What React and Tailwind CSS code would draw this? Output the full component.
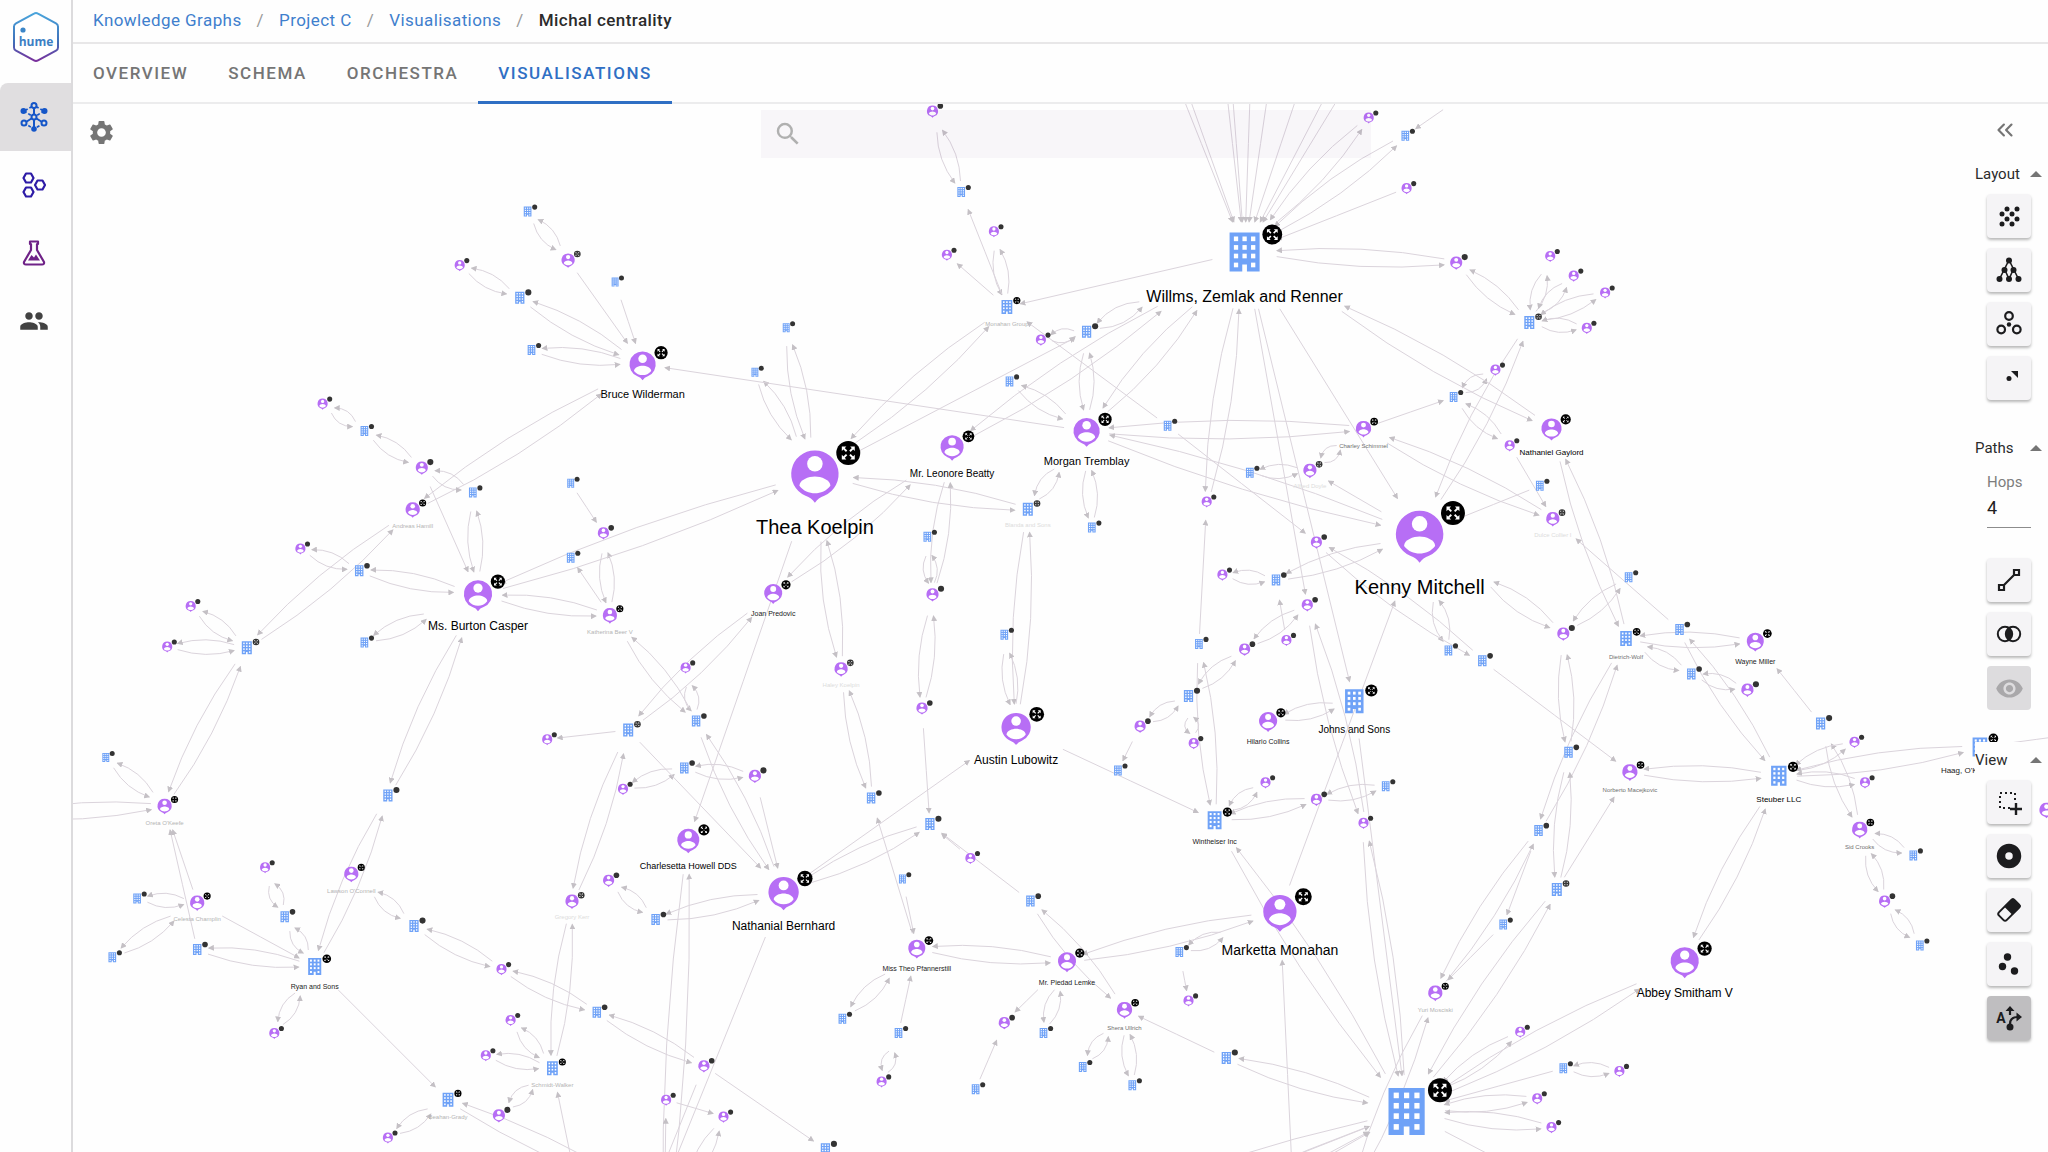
// VisualisationPage.jsx
import React, { useState } from 'react';
import { MdSettings, MdSearch, MdGroup, MdVisibility } from 'react-icons/md';
import { ChevronsLeft } from 'lucide-react';

const ZOOM = 1.306;
const PAN = { x: -73, y: -104 };

// id: [type, x, y, size, label]  (P = person, B = building, X = outside of the viewport)
const NODES = {
  b1: ['B', 404, 162, 10], p1: ['P', 435, 199, 13], p2: ['P', 352, 203, 10], b2: ['B', 398, 228, 12],
  b3: ['B', 471, 216, 9], b4: ['B', 407, 268, 10], bruce: ['P', 492, 279, 26, 'Bruce Wilderman'],
  b5: ['B', 602, 251, 9], b6: ['B', 578, 285, 9], andreas: ['P', 316, 390, 14, 'Andreas Hamill'],
  p3: ['P', 247, 309, 10], b7: ['B', 279, 330, 10], p4: ['P', 323, 358, 12], b8: ['B', 362, 377, 10],
  p5: ['P', 230, 420, 10], b9: ['B', 275, 437, 11], casper: ['P', 366, 455, 28, 'Ms. Burton Casper'],
  b10: ['B', 279, 492, 10], p6: ['P', 146, 464, 10], p7: ['P', 128, 495, 10], b11: ['B', 189, 496, 13],
  b12: ['B', 437, 370, 9], p8: ['P', 462, 408, 11], b13: ['B', 437, 427, 10], kath: ['P', 467, 471, 14, 'Katherina Beer V'],
  p9: ['P', 525, 511, 10], b14: ['B', 481, 559, 13], b15: ['B', 533, 552, 11], p10: ['P', 419, 566, 10],
  thea: ['P', 624, 363, 47, 'Thea Koelpin'], joan: ['P', 592, 454, 18, 'Joan Predovic'],
  p12: ['P', 644, 512, 13, 'Haley Koelpin'], b16: ['B', 667, 611, 11], b17: ['B', 787, 390, 13, 'Blanda and Sons'],
  monahan: ['B', 771, 235, 14, 'Monahan Group'], b18: ['B', 832, 254, 12], leonore: ['P', 729, 342, 23, 'Mr. Leonore Beatty'],
  p13: ['P', 714, 455, 12], b19: ['B', 710, 411, 10], p14: ['P', 706, 542, 11], b20: ['B', 712, 631, 12],
  morgan: ['P', 832, 330, 26, 'Morgan Tremblay'], b21: ['B', 773, 292, 10], b22: ['B', 836, 404, 10],
  b23: ['B', 894, 326, 10], p15: ['P', 1008, 415, 11], p16: ['P', 797, 260, 10], p17: ['P', 761, 177, 10],
  p18: ['P', 725, 195, 10], b24: ['B', 736, 147, 10], p19: ['P', 714, 85, 11],
  willms: ['B', 953, 193, 39, 'Willms, Zemlak and Renner'], p20: ['P', 1048, 90, 10], b25: ['B', 1076, 104, 10],
  p21: ['P', 1077, 144, 10], p22: ['P', 1115, 201, 12], b26: ['B', 1171, 247, 13], p23: ['P', 1187, 196, 10],
  p24: ['P', 1205, 211, 10], p25: ['P', 1229, 224, 10], p26: ['P', 1215, 251, 10], p27: ['P', 1145, 283, 10],
  b27: ['B', 1113, 304, 10], charley: ['P', 1044, 328, 15, 'Charley Schimmel'], p28: ['P', 1156, 341, 10],
  dulce: ['P', 1189, 397, 13, 'Dulce Collier I'], b28: ['B', 1179, 372, 10], gaylord: ['P', 1188, 328, 20, 'Nathaniel Gaylord'],
  doyle: ['P', 1003, 360, 13, 'Alfred Doyle'], b29: ['B', 957, 362, 10], p30: ['P', 924, 384, 10], b30: ['B', 918, 493, 10],
  p31: ['P', 1001, 463, 11], johns: ['B', 1037, 537, 24, 'Johns and Sons'], p46: ['P', 1044, 630, 10],
  p32: ['P', 936, 440, 10], b31: ['B', 977, 444, 11], p33: ['P', 985, 490, 10], p34: ['P', 953, 497, 11],
  b32: ['B', 910, 533, 12], p35: ['P', 873, 556, 11], p36: ['P', 914, 569, 10], b33: ['B', 856, 590, 10],
  kenny: ['P', 1087, 409, 47, 'Kenny Mitchell'], p40: ['P', 1197, 485, 12], b34: ['B', 1247, 442, 10],
  b35: ['B', 1109, 498, 10], b36: ['B', 1135, 506, 11], norberto: ['P', 1248, 591, 15, 'Norberto Macejkovic'],
  b37: ['B', 1286, 482, 11], steuber: ['B', 1362, 594, 20, 'Steuber LLC'], dietrich: ['B', 1245, 489, 15, 'Dietrich-Wolf'],
  wayne: ['P', 1344, 491, 17, 'Wayne Miller'], b38: ['B', 1295, 516, 11], p41: ['P', 1338, 528, 12], b39: ['B', 1394, 554, 12],
  sid: ['P', 1424, 635, 15, 'Sid Crooks'], p42: ['P', 1420, 568, 10], p43: ['P', 1428, 599, 10],
  haag: ['B', 1516, 572, 19, "Haag, O'Kon and Roe"], p50: ['P', 1567, 620, 14], b40: ['B', 1465, 655, 10], p45: ['P', 1443, 690, 11],
  b41: ['B', 1470, 724, 10], abbey: ['P', 1290, 736, 28, 'Abbey Smitham V'], big: ['B', 1077, 851, 47],
  b42: ['B', 1201, 576, 11], b43: ['B', 1178, 636, 11], b44: ['B', 1192, 681, 13], yuri: ['P', 1099, 760, 14, 'Yuri Mosciski'],
  b45: ['B', 1151, 708, 10], hilario: ['P', 971, 552, 18, 'Hilario Collins'], p47: ['P', 969, 599, 10],
  wint: ['B', 930, 628, 18, 'Wintheiser Inc'], p48: ['P', 1008, 612, 11], b46: ['B', 1061, 602, 10],
  austin: ['P', 778, 557, 29, 'Austin Lubowitz'], b47: ['B', 769, 486, 10], p49: ['P', 743, 657, 10], b48: ['B', 789, 690, 11],
  shera: ['P', 861, 773, 15, 'Shera Ullrich'], marketta: ['P', 980, 698, 33, 'Marketta Monahan'],
  piedad: ['P', 817, 736, 18, 'Mr. Piedad Lemke'], b49: ['B', 903, 729, 10], p51: ['P', 910, 766, 10],
  theo: ['P', 702, 726, 17, 'Miss Theo Pfannerstill'], p52: ['P', 769, 783, 11], b50: ['B', 799, 791, 10],
  b51: ['B', 747, 834, 10], b52: ['B', 829, 817, 10], b53: ['B', 867, 831, 10], b54: ['B', 939, 810, 12],
  b55: ['B', 645, 780, 10], b56: ['B', 688, 791, 10], p53: ['P', 675, 828, 10], b57: ['B', 691, 673, 9],
  charlesetta: ['P', 527, 643, 22, 'Charlesetta Howell DDS'], nathanial: ['P', 600, 683, 30, 'Nathanial Bernhard'],
  p54: ['P', 578, 594, 12], b58: ['B', 524, 588, 11], p55: ['P', 477, 604, 10], p56: ['P', 466, 674, 11], b59: ['B', 502, 704, 11],
  p11: ['P', 438, 690, 13, 'Gregory Kerr'], b60: ['B', 423, 818, 14, 'Schmidt-Walker'], p57: ['P', 391, 781, 10],
  p58: ['P', 372, 808, 10], p59: ['P', 382, 854, 12], b61: ['B', 343, 842, 14, 'Beahan-Grady'], p60: ['P', 297, 871, 10],
  oreta: ['P', 126, 617, 14, "Oreta O'Keefe"], b62: ['B', 81, 580, 9], b63: ['B', 151, 727, 11],
  celesta: ['P', 151, 691, 14, 'Celesta Champlin'], b64: ['B', 105, 688, 10], b65: ['B', 86, 733, 10],
  ryan: ['B', 241, 740, 17, 'Ryan and Sons'], p61: ['P', 210, 791, 10], p62: ['P', 203, 664, 10], b66: ['B', 218, 702, 11],
  b67: ['B', 297, 609, 12], lawson: ['P', 269, 669, 14, "Lawson O'Connell"], b68: ['B', 317, 709, 12], p63: ['P', 384, 742, 10],
  b69: ['B', 457, 775, 11], p64: ['P', 539, 816, 11], b70: ['B', 632, 880, 12], p65: ['P', 510, 842, 10], p66: ['P', 554, 855, 10],
  p67: ['P', 1164, 790, 10], b71: ['B', 1197, 818, 10], p68: ['P', 1240, 820, 10], p69: ['P', 1177, 841, 10], p70: ['P', 1188, 863, 10],
  t1: ['X', 896, 50], t2: ['X', 902, 50], t3: ['X', 937, 50], t4: ['X', 942, 50], t5: ['X', 958, 50], t6: ['X', 974, 50],
  t7: ['X', 1001, 50], t8: ['X', 1022, 60], t9: ['X', 1034, 60], t10: ['X', 1105, 84], t11: ['X', 700, 66],
  r1: ['X', 1590, 562], l1: ['X', 10, 624], d1: ['X', 510, 930], d2: ['X', 500, 930], d3: ['X', 440, 900], d4: ['X', 480, 907],
  d5: ['X', 530, 900], d6: ['X', 509, 910], d7: ['X', 505, 900], d8: ['X', 990, 910], d9: ['X', 1040, 900],
  d10: ['X', 830, 930], d11: ['X', 870, 950], d12: ['X', 1190, 910], d13: ['X', 930, 930],
};

const TWO_WAY = `b1-p1 p2-b2 b2-bruce b4-bruce bruce-andreas b5-thea b6-thea p3-b7 b7-p4 p4-b8 b8-casper p5-b9
  b9-casper b10-casper p6-b11 p7-b11 b11-andreas b11-oreta p8-kath kath-casper thea-casper p9-b15 b15-kath
  b14-joan b14-p11 joan-leonore thea-p12 p12-b16 thea-b17 thea-monahan willms-b18 willms-leonore willms-morgan
  leonore-p13 b19-p13 p13-p14 b21-morgan b18-morgan morgan-b17 morgan-b22 morgan-charley morgan-kenny p16-b18
  p17-monahan p19-b24 p20-willms b25-willms p22-willms p22-b26 p23-b26 p24-b26 p25-b26 p26-b26 b26-kenny
  p27-b27 b27-p28 gaylord-willms gaylord-dietrich charley-dulce b29-doyle doyle-charley p30-willms b30-wint
  p31-p46 p32-b31 b31-kenny p31-p34 p34-b32 b32-p35 b32-p36 kenny-p40 p40-b34 kenny-b35 b36-p15 b37-steuber
  dietrich-wayne dietrich-b38 b38-p41 b39-sid p42-steuber p43-steuber steuber-haag b40-sid p45-sid p45-b41
  steuber-abbey abbey-big norberto-steuber p40-b42 dietrich-b43 b42-b44 b43-yuri big-b44 johns-hilario
  p46-big p47-wint p48-wint b46-p48 austin-b17 b47-austin nathanial-b20 wint-big b48-shera marketta-piedad
  marketta-b49 piedad-theo piedad-b50 shera-b52 shera-b53 b54-big theo-b55 b56-p53 d1-charlesetta b15-nathanial
  b58-p54 b58-p55 p56-b59 b59-nathanial p11-b60 p57-b60 p58-b60 p59-b60 b61-p60 b61-d4 b62-oreta oreta-l1
  b64-celesta b65-celesta b63-ryan ryan-p61 p62-b66 b66-ryan ryan-b67 b67-casper lawson-b68 b68-p63 p63-b69
  b69-p64 d5-p66 p67-big b71-p68 p69-big p70-big yuri-d9 d10-big d11-big`.trim().split(/\s+/);

const ONE_WAY = `p1-bruce b3-bruce morgan-bruce p4-casper b12-p8 kath-b13 b14-p10 thea-b18 thea-charlesetta
  monahan-p18 monahan-b24 willms-monahan p14-b20 b23-monahan b23-p15 t1-willms t2-willms t3-willms t4-willms
  t5-willms t6-willms t7-willms t8-willms t9-willms t10-b25 t11-p19 p21-willms charley-b27 p28-dulce b28-kenny
  kenny-doyle willms-kenny b30-p30 willms-p31 willms-johns p33-b31 p35-b33 marketta-kenny b36-norberto
  b37-dulce b39-wayne haag-r1 b44-norberto b43-b45 b45-yuri johns-big austin-wint nathanial-austin p49-b20
  b48-b20 b49-p51 d8-marketta piedad-p52 b51-p52 b54-shera b56-theo theo-b16 b57-theo p54-nathanial
  b14-nathanial nathanial-d2 d3-b60 b63-oreta celesta-oreta celesta-ryan ryan-b61 p64-b70 p65-p66 d6-p65
  p64-d7 b71-big big-d12 d13-big`.trim().split(/\s+/);

const toScreen = ([, x, y]) => ({ x: x * ZOOM + PAN.x, y: y * ZOOM + PAN.y });

const fontSizeOf = (size) => Math.max(6, Math.round(size * 0.416));

// distance at which a ray (dx, dy) from the origin leaves the box
const exitBox = (dx, dy, x0, x1, y0, y1) => {
  let tMin = 0;
  let tMax = Infinity;
  for (const [d, lo, hi] of [[dx, x0, x1], [dy, y0, y1]]) {
    if (Math.abs(d) < 1e-6) {
      if (lo > 0 || hi < 0) return 0;
      continue;
    }
    const a = lo / d;
    const b = hi / d;
    tMin = Math.max(tMin, Math.min(a, b));
    tMax = Math.min(tMax, Math.max(a, b));
  }
  return tMax > tMin ? tMax : 0;
};

const clearance = ([type, , , size, label], dx, dy) => {
  if (type === 'X') return 0;
  const icon = exitBox(dx, dy, -size * 0.75 - 3, size * 0.75 + 3, -size * 0.7 - 3, size * 0.7 + 3);
  const half = label ? label.length * fontSizeOf(size) * 0.26 : size * 0.7;
  const text = exitBox(dx, dy, -half, half, size * 0.7, size * 1.3 + 6);
  return Math.max(icon, text);
};

const Edge = ({ from, to, curved }) => {
  const a = toScreen(NODES[from]);
  const b = toScreen(NODES[to]);
  const len = Math.hypot(b.x - a.x, b.y - a.y);
  const ux = (b.x - a.x) / len;
  const uy = (b.y - a.y) / len;
  const side = curved ? 3 : 0;
  const bow = curved ? 7 + Math.min(6, len * 0.02) : 0;
  const start = clearance(NODES[from], ux, uy);
  const end = clearance(NODES[to], -ux, -uy);
  const x1 = a.x + ux * start - uy * side;
  const y1 = a.y + uy * start + ux * side;
  const x2 = b.x - ux * end - uy * side;
  const y2 = b.y - uy * end + ux * side;
  const cx = (x1 + x2) / 2 - uy * bow;
  const cy = (y1 + y2) / 2 + ux * bow;
  return (
    <path
      d={`M${x1.toFixed(1)} ${y1.toFixed(1)}Q${cx.toFixed(1)} ${cy.toFixed(1)} ${x2.toFixed(1)} ${y2.toFixed(1)}`}
      className="fill-none stroke-[#dbd4dc]"
      markerEnd="url(#arrow)"
    />
  );
};

const PersonShape = () => (
  <>
    <path d="M0-.5A.5.5 0 0 1 .2.46Q.07.5 0 .61Q-.07.5-.2.46A.5.5 0 0 1 0-.5Z" fill="#b76ef5" />
    <circle cy="-.22" r=".165" fill="#fff" />
    <path d="M-.33.25C-.33.12-.13.05 0 .05S.33.12.33.25C.25.36.12.41 0 .41S-.25.36-.33.25Z" fill="#fff" />
  </>
);

const BuildingShape = () => (
  <>
    <path d="M-.385-.5H.385V.5H.06V.32H-.06V.5H-.385Z" fill="#6fa2f7" />
    {[-0.34, -0.12, 0.1, 0.33].map((y) =>
      [-0.22, 0, 0.22].map((x) =>
        x === 0 && y === 0.33 ? null : (
          <rect key={`${x}${y}`} x={x - 0.055} y={y - 0.06} width=".11" height=".12" fill="#fff" />
        )
      )
    )}
  </>
);

const ExpandBadge = ({ size }) => (
  <>
    <circle r=".5" fill={size < 14 ? '#333' : '#000'} />
    {size >= 13 && (
      <g stroke="#fff" strokeWidth=".08" fill="#fff">
        {[0, 90, 180, 270].map((r) => (
          <g key={r} transform={`rotate(${r})`}>
            <path d="M.07-.07L.19-.19" />
            <path d="M.08-.27H.27V-.08Z" stroke="none" />
          </g>
        ))}
      </g>
    )}
  </>
);

const labelColor = (size) => {
  if (size >= 20) return '#000';
  if (size >= 17) return '#222';
  if (size >= 15) return '#707070';
  if (size >= 14) return '#b4b4b4';
  return '#dcdcdc';
};

const Node = ({ node }) => {
  const [type, , , size, label] = node;
  const { x, y } = toScreen(node);
  if (type === 'X') return null;
  return (
    <g transform={`translate(${x.toFixed(1)} ${y.toFixed(1)})`}>
      <g transform={`scale(${size})`}>{type === 'P' ? <PersonShape /> : <BuildingShape />}</g>
      <g transform={`translate(${size * 0.71} ${size * -0.45}) scale(${Math.max(5, size * 0.51)})`}>
        <ExpandBadge size={size} />
      </g>
      {label && (
        <text
          y={Math.round(size * 1.08 + 2)}
          textAnchor="middle"
          dominantBaseline="central"
          fontSize={fontSizeOf(size)}
          fill={labelColor(size)}
        >
          {label}
        </text>
      )}
    </g>
  );
};

const Graph = () => (
  <svg className="absolute inset-0 h-full w-full font-['Liberation_Sans',Arial,sans-serif]">
    <defs>
      <marker id="arrow" viewBox="0 0 6 6" refX="5" refY="3" markerWidth="6" markerHeight="6" markerUnits="userSpaceOnUse" orient="auto">
        <path d="M0 0L6 3L0 6Z" fill="#c4c0c5" />
      </marker>
    </defs>
    {TWO_WAY.map((pair) => {
      const [a, b] = pair.split('-');
      return (
        <g key={pair}>
          <Edge from={a} to={b} curved />
          <Edge from={b} to={a} curved />
        </g>
      );
    })}
    {ONE_WAY.map((pair) => {
      const [a, b] = pair.split('-');
      return <Edge key={pair} from={a} to={b} />;
    })}
    {Object.entries(NODES).map(([id, node]) => (
      <Node key={id} node={node} />
    ))}
  </svg>
);

const HumeLogo = () => (
  <svg viewBox="0 0 48 52" className="h-[52px] w-12">
    <defs>
      <linearGradient id="hume" x1="0" y1="0" x2="0" y2="1">
        <stop offset="0" stopColor="#4aa5dc" />
        <stop offset=".6" stopColor="#3f6fb8" />
        <stop offset="1" stopColor="#7a2f9c" />
      </linearGradient>
    </defs>
    <path
      d="M22 2.6Q24 1.4 26 2.6L44 12.3Q46 13.4 46 15.6V36.4Q46 38.6 44 39.7L26 49.4Q24 50.6 22 49.4L4 39.7Q2 38.6 2 36.4V15.6Q2 13.4 4 12.3Z"
      fill="#fff" stroke="url(#hume)" strokeWidth="2"
    />
    <circle cx="11" cy="19" r="2.6" fill="#3b86c8" />
    <text x="24" y="35" textAnchor="middle" fontSize="12" fontWeight="700" fill="#3d7fc4" fontFamily="'Open Sans', sans-serif">hume</text>
  </svg>
);

const KnowledgeIcon = () => (
  <svg viewBox="0 0 28 30" className="h-[30px] w-7" fill="none" stroke="#1556c8" strokeWidth="2">
    <path d="M14 6V12M14 18V26M11.5 16.5L6 20M16.5 16.5L22 20" />
    <path d="M12 4.5L4 9M16 4.5L24 9M4 9L12 14M24 9L16 14M4 21L14 27L24 21" strokeDasharray="3 2" strokeWidth="1.7" />
    <g fill="#e0dee0">
      <circle cx="14" cy="3.5" r="2.5" />
      <circle cx="14" cy="15" r="2.5" />
      <circle cx="4" cy="21" r="2.5" />
      <circle cx="24" cy="21" r="2.5" />
    </g>
    <g fill="#1556c8" stroke="none">
      <circle cx="3.5" cy="9" r="3" />
      <circle cx="24.5" cy="9" r="3" />
      <circle cx="14" cy="27" r="2.8" />
    </g>
  </svg>
);

const HexagonsIcon = () => (
  <svg viewBox="0 0 24 26" className="h-[26px] w-6" fill="none" stroke="#2d1ba6" strokeWidth="2.2" strokeLinejoin="round">
    <path d="M4 1.5H9L11.5 6L9 10.5H4L1.5 6ZM4 15.5H9L11.5 20L9 24.5H4L1.5 20ZM15.5 8.5H20.5L23 13L20.5 17.5H15.5L13 13Z" />
  </svg>
);

const FlaskIcon = () => (
  <svg viewBox="0 0 24 26" className="h-[26px] w-6" fill="none" stroke="#6f2287" strokeWidth="2.2" strokeLinejoin="round">
    <path d="M8 1.5H16V4H15V10L22 22Q22.5 24.5 20 24.5H4Q1.5 24.5 2 22L9 10V4H8Z" />
    <path d="M6 20.5L9.5 15L12 17.5L14 14.5L18 20.5Z" fill="#6f2287" stroke="none" />
  </svg>
);

const SIDEBAR = [
  { name: 'Knowledge Graphs', icon: <KnowledgeIcon /> },
  { name: 'Ontologies', icon: <HexagonsIcon /> },
  { name: 'Skills', icon: <FlaskIcon /> },
  { name: 'Users', icon: <MdGroup size={30} className="text-[#424242]" /> },
];

const TABS = ['Overview', 'Schema', 'Orchestra', 'Visualisations'];

const Dots = ({ points, r = 2.2 }) => points.map(([x, y]) => <circle key={`${x}-${y}`} cx={x} cy={y} r={r} />);

const ToolIcon = ({ children }) => (
  <svg viewBox="0 0 26 26" className="h-[26px] w-[26px] fill-current">{children}</svg>
);

const LAYOUT_TOOLS = [
  {
    name: 'Force layout',
    icon: <Dots points={[[11, 6], [21, 6], [6, 11], [16, 11], [11, 16], [21, 16], [6, 21], [16, 21]]} r={2.5} />,
  },
  {
    name: 'Hierarchical layout',
    icon: (
      <>
        <path d="M13 3L3.5 22M13 3L22.5 22M17.5 12L13 22M8.5 12L13 22" fill="none" stroke="currentColor" strokeWidth="1.6" />
        <Dots points={[[13, 3.5], [8.5, 13], [17.5, 13], [3.5, 22], [13, 22], [22.5, 22]]} r={3} />
      </>
    ),
  },
  {
    name: 'Radial layout',
    icon: (
      <>
        <Dots points={[[13, 13.5]]} r={2.2} />
        <g fill="none" stroke="currentColor" strokeWidth="2.2">
          <circle cx="13" cy="5" r="3.8" />
          <circle cx="5.2" cy="18.5" r="3.8" />
          <circle cx="20.8" cy="18.5" r="3.8" />
        </g>
      </>
    ),
  },
  {
    name: 'Directional layout',
    icon: (
      <>
        <circle cx="13" cy="13.5" r="2.5" />
        <path d="M15 6H22V13Z" />
      </>
    ),
  },
];

const PATH_TOOLS = [
  {
    name: 'Shortest path',
    icon: (
      <g fill="none" stroke="currentColor" strokeWidth="2.2">
        <path d="M3 18H8V23H3ZM18 3H23V8H18ZM8 18L18 8" />
      </g>
    ),
  },
  {
    name: 'Common neighbours',
    icon: (
      <>
        <g fill="none" stroke="currentColor" strokeWidth="2">
          <circle cx="9" cy="13" r="7.2" />
          <circle cx="17" cy="13" r="7.2" />
        </g>
        <path d="M13 6.5A8 8 0 0 1 13 19.5A8 8 0 0 1 13 6.5Z" />
      </>
    ),
  },
  { name: 'Show path', disabled: true, icon: <MdVisibility size={29} /> },
];

const VIEW_TOOLS = [
  {
    name: 'Select area',
    icon: (
      <>
        <path d="M4 4H19V19H4Z" fill="none" stroke="currentColor" strokeWidth="2" strokeDasharray="2 3" />
        <path d="M14 14H26V26H14Z" className="fill-[#f5f4f6]" />
        <path d="M20 14V26M14 20H26" stroke="currentColor" strokeWidth="2.4" />
      </>
    ),
  },
  { name: 'Centre', icon: <circle cx="13" cy="13" r="8" fill="none" stroke="currentColor" strokeWidth="8.5" /> },
  {
    name: 'Erase',
    icon: (
      <g transform="rotate(-45 13 13)">
        <rect x="2" y="7.5" width="22" height="11" rx="2.5" fill="none" stroke="currentColor" strokeWidth="2" />
        <path d="M12 7H23Q24.5 7 24.5 8.5V17.5Q24.5 19 23 19H12Z" />
      </g>
    ),
  },
  { name: 'Scatter', icon: <Dots points={[[11.5, 6], [6.5, 15.5], [18.5, 20]]} r={3.7} /> },
  {
    name: 'Toggle captions',
    pressed: true,
    icon: (
      <>
        <text x="5" y="18" textAnchor="middle" fontSize="14" fontWeight="700" fontFamily="Roboto, sans-serif">A</text>
        <circle cx="14" cy="22" r="3.5" />
        <path d="M14 22V19Q14 12 22 12M14 10V4" fill="none" stroke="currentColor" strokeWidth="2.2" />
        <path d="M9.5 6L14 1L18.5 6ZM20.5 7.5L26 12L20.5 16.5Z" />
      </>
    ),
  },
];

const ToolButton = ({ name, disabled, pressed, icon }) => {
  let look = 'bg-[#f5f4f6] text-[#1c1c1e] shadow-[0_2px_3px_rgba(0,0,0,0.28)]';
  if (disabled) look = 'bg-[#dddcde] text-[#a9a8aa]';
  if (pressed) look = 'bg-[#bfbec0] text-[#1c1c1e] shadow-[0_2px_3px_rgba(0,0,0,0.28)]';
  return (
    <button type="button" aria-label={name} aria-pressed={pressed} disabled={disabled} className={`flex h-11 w-11 items-center justify-center rounded ${look}`}>
      {name === 'Show path' ? icon : <ToolIcon>{icon}</ToolIcon>}
    </button>
  );
};

const PanelHeader = ({ title }) => (
  <button type="button" className="flex h-9 w-full items-center justify-between bg-[#fefefe] pr-1.5 text-[15px] text-[#2b2b2b]">
    {title}
    <svg viewBox="0 0 12 6" className="h-1.5 w-3 fill-[#757575]"><path d="M0 6L6 0L12 6Z" /></svg>
  </button>
);

const ToolPanel = () => {
  const [hops, setHops] = useState('4');
  return (
    <aside className="absolute top-0 right-0 flex w-[73px] flex-col">
      <button type="button" aria-label="Collapse panel" className="mt-3 ml-4 flex h-7 w-7 items-center justify-center text-[#757575]">
        <ChevronsLeft size={26} strokeWidth={2} />
      </button>
      <div className="mt-3">
        <PanelHeader title="Layout" />
        <div className="mt-0.5 ml-3 flex flex-col gap-2.5">
          {LAYOUT_TOOLS.map((tool) => <ToolButton key={tool.name} {...tool} />)}
        </div>
      </div>
      <div className="mt-[30px]">
        <PanelHeader title="Paths" />
        <div className="mt-1.5 ml-3 w-11">
          <label htmlFor="hops" className="block text-[15px] leading-5 text-[#7d7d7d]">Hops</label>
          <input
            id="hops"
            value={hops}
            onChange={(e) => setHops(e.target.value)}
            className="block h-9 w-full border-b border-[#8c8c8c] pb-1 text-lg text-[#212121] outline-none"
          />
        </div>
        <div className="mt-[30px] ml-3 flex flex-col gap-2.5">
          {PATH_TOOLS.map((tool) => <ToolButton key={tool.name} {...tool} />)}
        </div>
      </div>
      <div className="mt-8">
        <PanelHeader title="View" />
        <div className="mt-0.5 ml-3 flex flex-col gap-2.5">
          {VIEW_TOOLS.map((tool) => <ToolButton key={tool.name} {...tool} />)}
        </div>
      </div>
    </aside>
  );
};

const VisualisationPage = () => {
  const [tab, setTab] = useState('Visualisations');

  return (
    <div className="flex h-screen bg-[#fefefe] font-[Roboto,sans-serif]">
      <nav className="flex w-[73px] shrink-0 flex-col border-r-2 border-[#dcdbdd]">
        <a href="#home" aria-label="Hume" className="flex h-[83px] items-start justify-center pt-[11px]">
          <HumeLogo />
        </a>
        {SIDEBAR.map((item, i) => (
          <a
            key={item.name}
            href="#section"
            aria-label={item.name}
            className={`flex h-[68px] items-center justify-center pr-1 ${i === 0 ? 'rounded-tl-lg bg-[#e0dee0]' : ''}`}
          >
            {item.icon}
          </a>
        ))}
      </nav>
      <div className="flex min-w-0 flex-1 flex-col">
        <div className="flex h-11 items-center gap-[15px] border-b-2 border-[#e8e7e8] px-5 text-[17px] tracking-wide text-[#9a9a9a]">
          <a href="#graphs" className="text-[#3f7fcd]">Knowledge Graphs</a>
          <span>/</span>
          <a href="#project" className="text-[#3f7fcd]">Project C</a>
          <span>/</span>
          <a href="#visualisations" className="text-[#3f7fcd]">Visualisations</a>
          <span>/</span>
          <span className="font-medium text-[#2b2b2b]">Michal centrality</span>
        </div>
        <div className="flex h-[60px] border-b-2 border-[#ececed]">
          {TABS.map((name) => (
            <button
              key={name}
              type="button"
              onClick={() => setTab(name)}
              className={`-mb-0.5 border-b-3 px-5 pt-0.5 text-[17px] font-medium tracking-[0.09em] uppercase ${
                tab === name ? 'border-[#2f6fc4] text-[#2f6fc4]' : 'border-transparent text-[#757575]'
              }`}
            >
              {name}
            </button>
          ))}
        </div>
        <main className="relative flex-1 overflow-hidden">
          <Graph />
          <div className="absolute inset-x-0 top-0 flex items-start pt-1.5 pr-8 pl-3.5">
            <button type="button" aria-label="Settings" className="mt-2 text-[#757575]">
              <MdSettings size={29} />
            </button>
            <label className="mx-auto flex h-12 w-[610px] items-center bg-[#5a3278]/4 px-3">
              <MdSearch size={30} className="text-[#b0b0b0]" />
              <input aria-label="Search" className="ml-2 flex-1 bg-transparent text-base outline-none" />
            </label>
          </div>
          <ToolPanel />
        </main>
      </div>
    </div>
  );
};

export default VisualisationPage;
